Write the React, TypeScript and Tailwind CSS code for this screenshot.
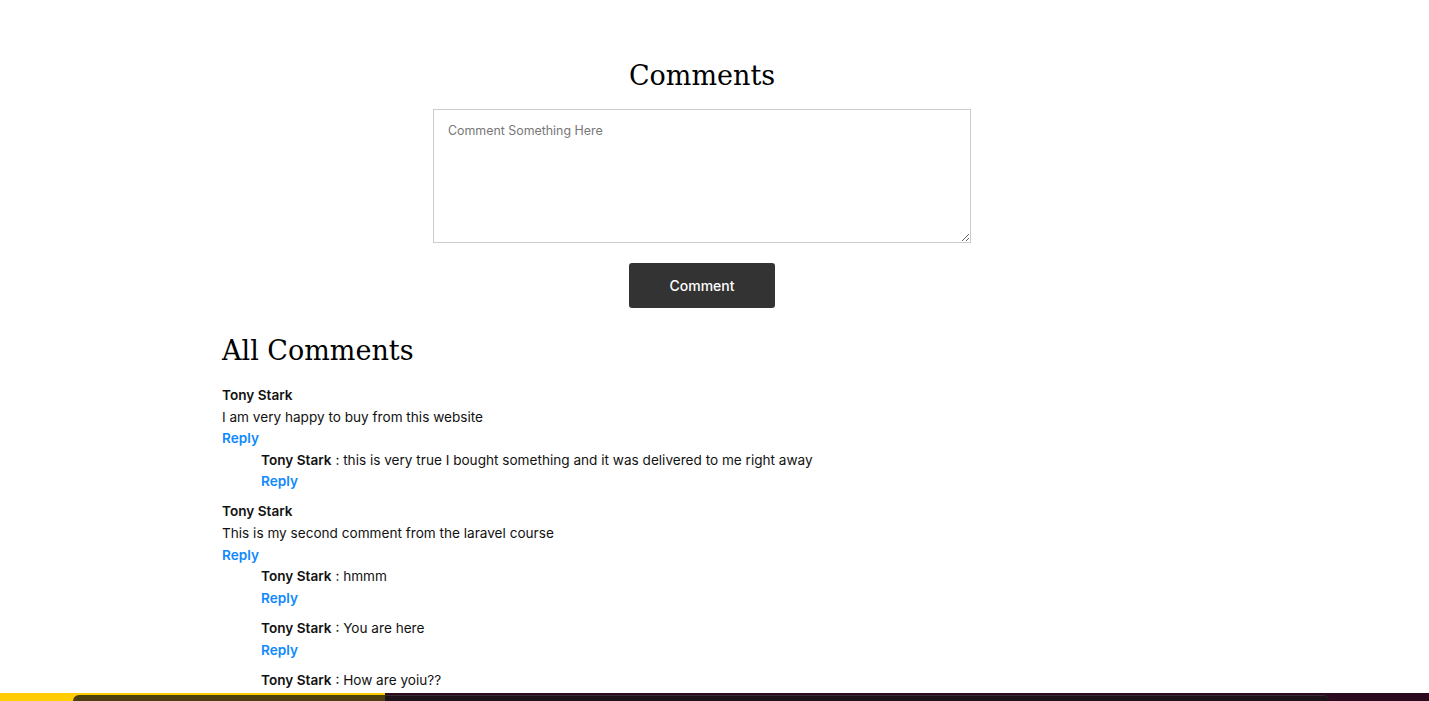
import React from "react";

type Reply = { text: string };
type Comment = { name: string; text: string; replies: Reply[] };

const comments: Comment[] = [
  {
    name: "Tony Stark",
    text: "I am very happy to buy from this website",
    replies: [{ text: "this is very true I bought something and it was delivered to me right away" }],
  },
  {
    name: "Tony Stark",
    text: "This is my second comment from the laravel course",
    replies: [{ text: "hmmm" }, { text: "You are here" }, { text: "How are yoiu??" }],
  },
];

export default function App() {
  return (
    <div className="relative min-h-[701px] bg-white font-['Inter',sans-serif] text-[13.6px] text-[#111]">
      <div className="ml-[222px] w-[960px] pt-[59px]">
        {/* Form */}
        <h2 className="text-center font-['DejaVu_Serif',serif] text-[27px] leading-[34px] text-black">Comments</h2>
        <div className="mt-[16px] flex flex-col items-center">
          <textarea
            placeholder="Comment Something Here"
            className="h-[134px] w-[538px] border border-[#cccccc] px-[14px] py-[12px] text-[12.4px] text-[#333] outline-none placeholder:text-[#777]"
          />
          <button className="mt-[20px] h-[45px] w-[146px] rounded-[3px] bg-[#333333] text-[14px] font-medium text-white">
            Comment
          </button>
        </div>

        {/* List */}
        <h2 className="mt-[26px] font-['DejaVu_Serif',serif] text-[27px] leading-[34px] text-black">All Comments</h2>
        <div className="mt-[17px]">
          {comments.map((c, i) => (
            <div key={i} className="leading-[21.6px]">
              <div className="font-semibold">{c.name}</div>
              <div>{c.text}</div>
              <a href="#" className="font-semibold text-[#1089ff]">Reply</a>
              <div className="pl-[39px]">
                {c.replies.map((r, j) => (
                  <div key={j} className="mb-[8.5px]">
                    <div>
                      <span className="font-semibold">{c.name}</span> : {r.text}
                    </div>
                    <a href="#" className="font-semibold text-[#1089ff]">Reply</a>
                  </div>
                ))}
              </div>
            </div>
          ))}
        </div>
      </div>

      {/* Desktop taskbar peeking in at the bottom */}
      <div className="fixed bottom-0 left-0 right-0 flex h-[8px]">
        <div className="flex h-full w-[385px] items-end bg-[#ffcc00] pl-[73px]">
          <div className="h-[6px] w-full rounded-tl-[10px] bg-[#4e3f10]" />
        </div>
        <div className="flex h-full flex-1 items-end bg-[#2b0a20] pr-[100px]">
          <div className="h-[6px] w-full rounded-tr-[10px] border-t border-[#3a2a33] bg-[#1d1218]" />
        </div>
      </div>
    </div>
  );
}
